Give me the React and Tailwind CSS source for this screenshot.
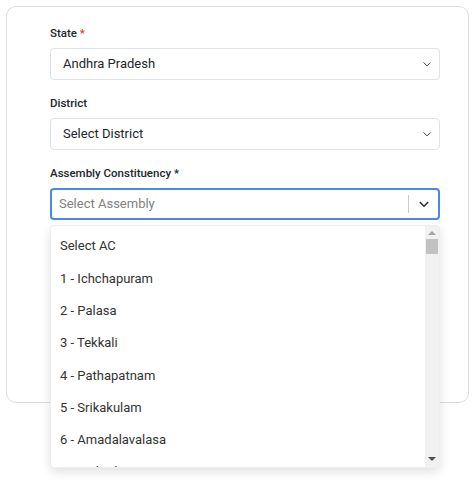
const acOptions = [
  'Select AC',
  '1 - Ichchapuram',
  '2 - Palasa',
  '3 - Tekkali',
  '4 - Pathapatnam',
  '5 - Srikakulam',
  '6 - Amadalavalasa',
  '7 - Etcherla',
];

function NativeSelect({ value }) {
  return (
    <div className="flex h-8 items-center justify-between rounded-[4px] border border-[#dee2e6] bg-white pl-3 pr-[7px] text-[13px] text-[#212529]">
      <span>{value}</span>
      <svg className="h-[10px] w-[10px] text-[#343a40]" viewBox="0 0 16 16" fill="none" aria-hidden="true">
        <path d="m3 6 5 5 5-5" stroke="currentColor" strokeWidth="1.6" strokeLinecap="round" strokeLinejoin="round" />
      </svg>
    </div>
  );
}

function FieldLabel({ children, required, redStar }) {
  return (
    <div className="mb-[7px] h-[17px] pt-px text-[11.5px] font-medium leading-4 text-[#212529]">
      {children}
      {required && <span className={redStar ? ' text-[#dc3545]' : ''}> *</span>}
    </div>
  );
}

function AssemblyMenu() {
  return (
    <div className="absolute left-0 right-0 top-[37px] z-10 h-[243px] overflow-hidden rounded-[4px] border border-[#eceeef] bg-white shadow-[0_4px_11px_rgba(0,0,0,0.12)]">
      <div className="pr-[14px] pt-[4px]">
        {acOptions.map((option) => (
          <div key={option} className="flex h-[32.3px] items-center pl-[9px] text-[13px] text-[#333333]">
            {option}
          </div>
        ))}
      </div>
      {/* scrollbar */}
      <div className="absolute bottom-0 right-0 top-0 flex w-[14px] flex-col items-center bg-[#f1f1f1]">
        <div className="mt-[5px] h-0 w-0 border-x-[4px] border-b-[4px] border-x-transparent border-b-[#a3a3a3]" />
        <div className="mt-[4px] h-[15px] w-[12px] bg-[#c1c1c1]" />
        <div className="flex-1" />
        <div className="mb-[6px] h-0 w-0 border-x-[4px] border-t-[4px] border-x-transparent border-t-[#505050]" />
      </div>
    </div>
  );
}

export default function App() {
  return (
    <div className="h-[481px] w-[474px] bg-white pl-[6px] pt-[6px] font-['Roboto','Liberation_Sans',sans-serif]">
      <div className="h-[397px] w-[463px] rounded-[10px] border border-[#dcdcdc] bg-white pl-[43px] pr-[28px] pt-[17px]">
        <FieldLabel required redStar>State</FieldLabel>
        <NativeSelect value="Andhra Pradesh" />

        <div className="mt-[14px]">
          <FieldLabel>District</FieldLabel>
          <NativeSelect value="Select District" />
        </div>

        <div className="relative mt-[14px]">
          <FieldLabel required>Assembly Constituency</FieldLabel>
          <div className="relative">
            <div className="flex h-8 items-center rounded-[4px] border-2 border-[#4a89e0] bg-white pl-[7px] text-[13px]">
              <span className="flex-1 text-[#808080]">Select Assembly</span>
              <span className="h-[18px] w-px bg-[#cccccc]" />
              <span className="flex w-[29px] items-center justify-center text-[#333333]">
                <svg className="h-[12px] w-[12px]" viewBox="0 0 16 16" fill="none" aria-hidden="true">
                  <path d="m3 6 5 5 5-5" stroke="currentColor" strokeWidth="2.2" strokeLinecap="round" strokeLinejoin="round" />
                </svg>
              </span>
            </div>
            <AssemblyMenu />
          </div>
        </div>
      </div>
    </div>
  );
}
